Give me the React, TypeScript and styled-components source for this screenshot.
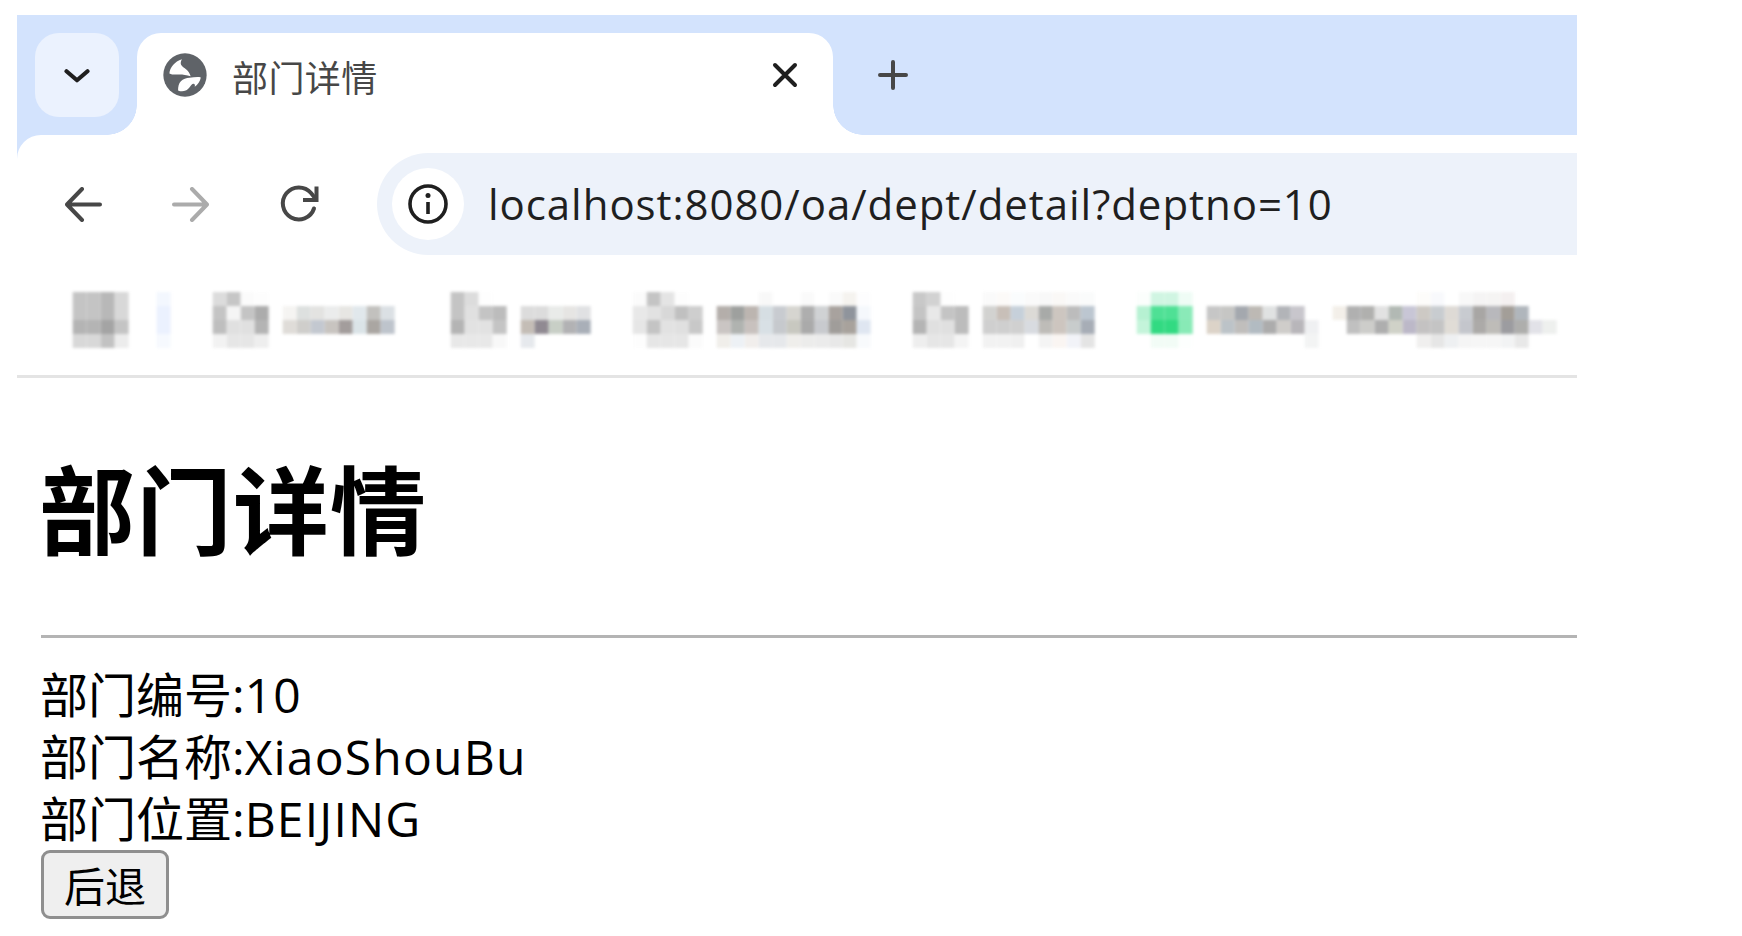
import React from "react";
import styled, { createGlobalStyle } from "styled-components";

const GlobalStyle = createGlobalStyle`
  html, body {
    margin: 0;
    padding: 0;
    height: 100%;
    overflow: hidden;
    background: #fff;
  }
  body {
    font-family: "Open Sans", "Noto Sans CJK SC", sans-serif;
  }
`;

const stripBlue = "#d3e3fd";
const cjk = `"Open Sans", "Noto Sans CJK SC", sans-serif`;

const Frame = styled.div`
  width: 1560px;
  margin: 15px 0 0 17px;
  overflow: hidden;
`;

const TabStrip = styled.div`
  display: flex;
  align-items: flex-start;
  height: 120px;
  padding: 18px 0 0 18px;
  box-sizing: border-box;
  background: ${stripBlue};
`;

const TabSearch = styled.div`
  display: flex;
  align-items: center;
  justify-content: center;
  width: 84px;
  height: 84px;
  border-radius: 24px;
  background: #ebf2fe;
  color: #1f1f1f;
`;

const Tab = styled.div`
  position: relative;
  display: flex;
  align-items: center;
  width: 696px;
  height: 102px;
  margin-left: 18px;
  padding: 0 33px 18px 22px;
  box-sizing: border-box;
  border-radius: 24px 24px 0 0;
  background: #fff;

  &::before,
  &::after {
    content: "";
    position: absolute;
    bottom: 0;
    width: 30px;
    height: 30px;
  }
  &::before {
    left: -30px;
    background: radial-gradient(circle at 0 0, transparent 29.5px, #fff 30px);
  }
  &::after {
    right: -30px;
    background: radial-gradient(circle at 100% 0, transparent 29.5px, #fff 30px);
  }
`;

const TabTitle = styled.span`
  flex: 1;
  margin: 8px 0 0 21px;
  font: 400 36px/1 ${cjk};
  letter-spacing: 0.4px;
  color: #474747;
`;

const NewTab = styled.div`
  display: flex;
  margin: 27px 0 0 45px;
  color: #474747;
`;

const Icon = styled.svg<{ $size: number; $muted?: boolean }>`
  display: block;
  flex: none;
  width: ${(p) => p.$size}px;
  height: ${(p) => p.$size}px;
  color: ${(p) => (p.$muted ? "#ababab" : "inherit")};
  filter: blur(0.5px);
`;

const Toolbar = styled.div`
  display: flex;
  height: 120px;
  background: ${stripBlue};
`;

const ToolbarInner = styled.div`
  display: flex;
  align-items: center;
  flex: 1;
  height: 120px;
  padding: 18px 0 0 42px;
  box-sizing: border-box;
  border-top-left-radius: 24px;
  background: #fff;
  color: #474747;
`;

const NavIcons = styled.div`
  display: flex;
  align-items: center;
  gap: 60px;
  margin-right: 54px;
`;

const Omnibox = styled.div`
  display: flex;
  align-items: center;
  flex: 1;
  height: 102px;
  padding-left: 15px;
  border-radius: 51px 0 0 51px;
  background: #edf2fa;
`;

const InfoChip = styled.div`
  display: flex;
  align-items: center;
  justify-content: center;
  width: 72px;
  height: 72px;
  border-radius: 50%;
  background: #fff;
  color: #1f1f1f;
`;

const Url = styled.span`
  margin-left: 24px;
  font: 400 42px/1 ${cjk};
  letter-spacing: 0.95px;
  color: #1f1f1f;
`;

const BookmarkBar = styled.div`
  height: 123px;
  padding: 37px 0 0 55px;
  box-sizing: border-box;
  border-bottom: 3px solid #e4e4e4;
`;

const Mosaic = styled.svg`
  display: block;
  filter: blur(1.6px);
`;

const Page = styled.main`
  padding-left: 24px;
  color: #000;
`;

const Title = styled.h1`
  margin: 68px 0 0 -2px;
  font: 700 96px/128px ${cjk};
  letter-spacing: 1px;
`;

const Rule = styled.hr`
  height: 3px;
  margin: 61px 0 26px;
  border: 0;
  background: #b4b4b4;
`;

const DetailLine = styled.div`
  margin-left: -1px;
  font: 400 48px/62px ${cjk};
`;

const DetailValue = styled.span`
  letter-spacing: 1.2px;
`;

const BackButton = styled.button`
  display: block;
  width: 128px;
  height: 69px;
  padding: 4px 0 0;
  border: 3px solid #8f8f8f;
  border-radius: 9px;
  background: #efefef;
  font: 400 41px/1 ${cjk};
  color: #000;
`;

// blurred bookmark bar, one cell every 14px: [first column, row, colours]
const cells: [number, number, string[]][] = [
  [0, 0, ["c4c4c4", "c4c4c4", "b8b8b8", "d8d8d8"]],
  [0, 1, ["c4c4c4", "c4c4c4", "b8b8b8", "d8d8d8"]],
  [0, 2, ["b4b4b4", "b4b4b4", "a4a4a4", "c4c4c4"]],
  [0, 3, ["d8d8d8", "d8d8d8", "c2c2c2", "ececec"]],
  [6, 0, ["f3f7fe"]],
  [6, 1, ["ebf1fe"]],
  [6, 2, ["ebf1fe"]],
  [6, 3, ["f6f9fe"]],
  [10, 0, ["dcdcdc", "c6c6c6", "fbfbfb", "fdfdfd"]],
  [10, 1, ["c4c4c4", "f5f5f5", "c4c4c4", "acacac"]],
  [10, 2, ["bebebe", "e0e0e0", "e0e0e0", "b4b4b4"]],
  [10, 3, ["f2f2f2", "e6e6e6", "e6e6e6", "eeeeee"]],
  [15, 1, ["f5f4f2", "dde0df", "e3e3e1", "ebecec", "e7e6e3", "e1e8ec", "c2c1be", "dbe0e4"]],
  [15, 2, ["dfdcd8", "cfcecb", "c3c8d0", "c8c4c0", "a39d9c", "dbe4e8", "aaa6a2", "bec4cc"]],
  [27, 0, ["c4c4c4", "dcdcdc", "fefefe"]],
  [27, 1, ["c4c4c4", "e0e0e0", "c4c4c4", "bcbcbc"]],
  [27, 2, ["b4b4b4", "e2e2e2", "e2e2e2", "c4c4c4"]],
  [27, 3, ["e8e8e8", "e8e8e8", "e8e8e8", "f8f8f8"]],
  [32, 1, ["dcdcdc", "dcdcdc", "e9ebe9", "e6e5e3", "e0e1e3"]],
  [32, 2, ["c4bdb6", "908a92", "c8cfc6", "b2b2b4", "a9afb8"]],
  [32, 3, ["e6e9ed"]],
  [40, 0, ["fbfbfb", "c4c4c4", "e4e4e4", "fdfdfd"]],
  [40, 1, ["e8e8e8", "e2e2e2", "d8d8d8", "c0c0c0", "cecece"]],
  [40, 2, ["e6e6e6", "c4c4c4", "e2e2e2", "e0e0e0", "c8c8c8"]],
  [40, 3, ["fdfdfd", "e6e6e6", "e6e6e6", "e6e6e6", "fbfbfb"]],
  [49, 0, ["f8f8f8", "ffffff", "ffffff", "fafafa", "ffffff", "fafafa", "f5f3ef", "fdfdfe"]],
  [46, 1, ["b4aeaa", "9ea09e", "bcb5b0", "d6dee3", "c8cbd0", "d6d5d0", "aeaeae", "d0d2d4", "a8a29e", "8f949c", "f5f8fc"]],
  [46, 2, ["cac5c3", "b0b3b0", "c8c1be", "d8e0e5", "c6c9cd", "c8c8c0", "aaaaaa", "c8cace", "a09d9a", "a8a29c", "dfe6f1"]],
  [46, 3, ["f0eeea", "edf1f5", "f1eeec", "e6e8eb", "e6e8eb", "efeeeb", "ececeb", "ebebeb", "e8e8e8", "e6e6e3", "f8fafc"]],
  [60, 0, ["c8c8c8", "d2d2d2", "fefefe"]],
  [60, 1, ["c4c4c4", "e8e8e8", "c4c4c4", "bcbcbc"]],
  [60, 2, ["b4b4b4", "e0e0e0", "e0e0e0", "bcbcbc"]],
  [60, 3, ["eeeeee", "e6e6e6", "e6e6e6", "f4f4f4"]],
  [65, 0, ["fafafa", "fcfaf8", "fafcfd", "fafafa", "f8f8f8", "faf8f6", "fafafa", "fafbfb"]],
  [65, 1, ["d2d2d0", "c8bfb8", "c6d0da", "dcdad6", "a8aaa8", "cdc6c0", "bcbcbc", "bcc6d0"]],
  [65, 2, ["cfcfcf", "cfcfcf", "d0d0d0", "d8dbe0", "bebcb8", "cdc5bf", "c8cccc", "a7adb6"]],
  [65, 3, ["f2f2f2", "f2f2f2", "f0f0f0", "ffffff", "f4f4f4", "faf5f2", "f2f3f8", "e4e4e4"]],
  [76, 0, ["fbfefc", "d0f5e2", "d0f5e2", "effcf5"]],
  [76, 1, ["b6f1d2", "4fe095", "4fe095", "8aeab8"]],
  [76, 2, ["c4f4da", "32da82", "32da82", "88eab6"]],
  [77, 3, ["f2fcf6", "f2fcf6", "fdfffe"]],
  [81, 1, ["c6c6c6", "c6c6c4", "a4a8ae", "bdb9b4", "e0e2e2", "b2b4b8", "c8c6cc"]],
  [81, 2, ["dcd3c8", "bcc3c8", "c0bebc", "b2bbc2", "acacac", "cfcdca", "b8b6ba", "eff0f2"]],
  [88, 3, ["f3f4f4"]],
  [90, 1, ["f3efe9", "b0b0b0", "b0b0ae", "e2e2e2", "b2b9b4", "c8c6d6", "cdc9c4", "c8ccd0", "dedad5", "c8cbd0", "a8a6a4", "b8b8bc", "a39e98", "b0b6bc"]],
  [91, 2, ["c0c0c0", "cdcdca", "aeaeae", "d0d2c8", "bcb8c8", "c4c2c2", "c4c4c4", "e0dcd6", "c4c6cc", "acaaa8", "bebcb8", "9c9ca0", "aeaeac", "e2e2e8", "eef0ee"]],
  [96, 0, ["fdfcfa", "f8f9fc", "ffffff", "f8f8f8", "f5f4f4", "f5f4f3", "f4f0f0"]],
  [96, 3, ["f0efee", "e6e6e6", "eef0f2", "f5f5f5", "f6f6f6", "f6f6f6", "f2f3f4", "e8e8e8"]],
];

const details = [
  { label: "部门编号:", value: "10" },
  { label: "部门名称:", value: "XiaoShouBu" },
  { label: "部门位置:", value: "BEIJING" },
];

export default function App() {
  return (
    <>
      <GlobalStyle />
      <Frame>
        <TabStrip>
          <TabSearch>
            <Icon $size={36} viewBox="0 0 24 24" fill="none" stroke="currentColor" strokeWidth="2.8" strokeLinecap="round" strokeLinejoin="round">
              <path d="M5 9.500l7 6 7-6" />
            </Icon>
          </TabSearch>
          <Tab>
            <Icon $size={52} viewBox="0 0 24 24">
              <circle cx="12" cy="12" r="10" fill="#5f6368" />
              <path fill="#fff" d="M4.800 11.300C5 8.400 7.200 5.800 10.600 4.700c-.6 1-.7 1.900-.4 2.600.4.900 1.500 1.400 2.400 2.200.9.700 1.500 1.700 2 3.100-1.800-.6-3.600-.8-5.200-.8-1.800 0-3.400.2-4.600-.5z" />
              <path fill="#fff" d="M8.800 19.100c0-1.600.3-3.200 1.300-4.200 1-1 2.500-1.500 4-1.600 1.800-.1 3.500-.6 5.200-.2-.3 1.800-1.400 3.300-2.800 4.300.2-.8 0-1.300-.5-1.400-.7-.1-1.200.7-1.700 1.400-.6.800-1.200 1.500-2 1.800-1 .4-2.300.5-3.500-.1z" />
            </Icon>
            <TabTitle>部门详情</TabTitle>
            <Icon $size={30} viewBox="0 0 30 30" fill="none" stroke="#1f1f1f" strokeWidth="4" strokeLinecap="round">
              <path d="M5 5l20 20M25 5L5 25" />
            </Icon>
          </Tab>
          <NewTab>
            <Icon $size={30} viewBox="0 0 30 30" fill="none" stroke="currentColor" strokeWidth="4" strokeLinecap="round">
              <path d="M15 2v26M2 15h26" />
            </Icon>
          </NewTab>
        </TabStrip>
        <Toolbar>
          <ToolbarInner>
            <NavIcons>
              <Icon $size={48} viewBox="0 0 48 48" fill="none" stroke="currentColor" strokeWidth="4" strokeLinecap="round" strokeLinejoin="round">
                <path d="M41 24.500H9M23 9L8 24.500 23 40" />
              </Icon>
              <Icon $size={48} $muted viewBox="0 0 48 48" fill="none" stroke="currentColor" strokeWidth="4" strokeLinecap="round" strokeLinejoin="round">
                <path d="M7 24.500h32M25 9l15 15.500L25 40" />
              </Icon>
              <Icon $size={48} viewBox="0 0 48 48" fill="none" stroke="currentColor" strokeWidth="4" strokeLinecap="round">
                <path d="M39 28.500A16 16 0 1 1 36 13L40 18" />
                <path d="M41.500 6.500v13.500H28" strokeLinecap="butt" />
              </Icon>
            </NavIcons>
            <Omnibox>
              <InfoChip>
                <Icon $size={44} viewBox="0 0 44 44" fill="none" stroke="currentColor" strokeWidth="3.6">
                  <circle cx="22" cy="22" r="18" />
                  <path d="M22 20v12" />
                  <circle cx="22" cy="13.500" r="2.500" fill="currentColor" stroke="none" />
                </Icon>
              </InfoChip>
              <Url>localhost:8080/oa/dept/detail?deptno=10</Url>
            </Omnibox>
          </ToolbarInner>
        </Toolbar>
        <BookmarkBar>
          <Mosaic width="1500" height="56" viewBox="0 0 1500 56">
            {cells.flatMap(([col, row, colors]) =>
              colors.map((c, i) => (
                <rect key={`${row}-${col + i}`} x={(col + i) * 14 + 0.7} y={row * 14} width="14" height="14" fill={`#${c}`} />
              ))
            )}
          </Mosaic>
        </BookmarkBar>
        <Page>
          <Title>部门详情</Title>
          <Rule />
          {details.map((d) => (
            <DetailLine key={d.label}>
              {d.label}
              <DetailValue>{d.value}</DetailValue>
            </DetailLine>
          ))}
          <BackButton>后退</BackButton>
        </Page>
      </Frame>
    </>
  );
}
